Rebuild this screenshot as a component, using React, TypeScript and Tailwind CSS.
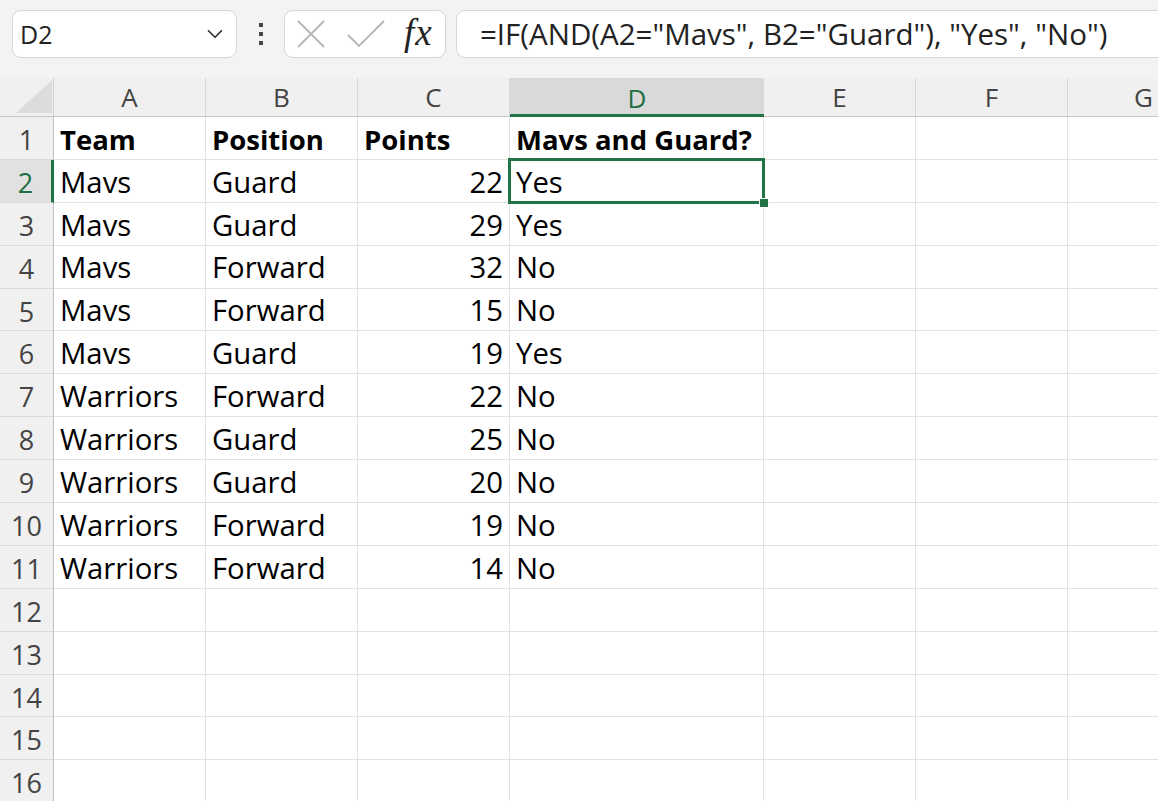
import { ChevronDown } from 'lucide-react';

const rows: [string, string, string, string][] = [
  ['Mavs', 'Guard', '22', 'Yes'],
  ['Mavs', 'Guard', '29', 'Yes'],
  ['Mavs', 'Forward', '32', 'No'],
  ['Mavs', 'Forward', '15', 'No'],
  ['Mavs', 'Guard', '19', 'Yes'],
  ['Warriors', 'Forward', '22', 'No'],
  ['Warriors', 'Guard', '25', 'No'],
  ['Warriors', 'Guard', '20', 'No'],
  ['Warriors', 'Forward', '19', 'No'],
  ['Warriors', 'Forward', '14', 'No'],
];

const cols = [
  { key: 'A', w: 'w-[152px]' },
  { key: 'B', w: 'w-[152px]' },
  { key: 'C', w: 'w-[152px]' },
  { key: 'D', w: 'w-[254px]' },
  { key: 'E', w: 'w-[152px]' },
  { key: 'F', w: 'w-[152px]' },
  { key: 'G', w: 'w-[152px]' },
];

const font = "font-['Open_Sans','Noto_Sans',sans-serif]";

function Toolbar() {
  return (
    <div className="h-[78px] bg-[#f3f3f3] flex items-start pt-[10px] pl-[12px] gap-0">
      {/* Name box */}
      <div className="w-[225px] h-[48px] bg-white border border-[#d6d6d6] rounded-[9px] flex items-center pl-[7px] pr-[8px]">
        <span className="text-[25px] text-[#222] leading-none">D2</span>
        <ChevronDown className="ml-auto text-[#333]" size={26} strokeWidth={1.6} />
      </div>
      {/* dots */}
      <div className="w-[47px] h-[48px] flex flex-col items-center justify-center gap-[5px]">
        <div className="w-[4px] h-[4px] bg-[#444]" />
        <div className="w-[4px] h-[4px] bg-[#444]" />
        <div className="w-[4px] h-[4px] bg-[#444]" />
      </div>
      {/* fx box */}
      <div className="w-[162px] h-[48px] bg-white border border-[#d6d6d6] rounded-[9px] flex items-center pl-[12px]">
        <svg width="28" height="28" viewBox="0 0 28 28" className="shrink-0">
          <path d="M1 1 L27 27 M27 1 L1 27" stroke="#b5b5b5" strokeWidth="1.8" fill="none" />
        </svg>
        <svg width="38" height="28" viewBox="0 0 38 28" className="shrink-0 ml-[22px]">
          <path d="M1 15 L12 26 L37 1" stroke="#b5b5b5" strokeWidth="1.8" fill="none" />
        </svg>
        <span className="ml-[19px] font-['Liberation_Serif',serif] italic text-[37px] text-[#222] leading-none tracking-[1px] -mt-[4px]">fx</span>
      </div>
      {/* formula box */}
      <div className="ml-[10px] flex-1 h-[48px] bg-white border border-[#d6d6d6] rounded-l-[9px] border-r-0 flex items-center pl-[23px]">
        <span className="text-[29.5px] text-[#222] leading-none whitespace-nowrap">=IF(AND(A2="Mavs", B2="Guard"), "Yes", "No")</span>
      </div>
    </div>
  );
}

function HeaderRow() {
  return (
    <div className="flex h-[39px] bg-[#f0f0f0] border-b border-[#c6c6c6]">
      <div className="w-[54px] shrink-0 border-r border-[#d0d0d0] relative">
        <svg width="54" height="38" viewBox="0 0 54 38" className="absolute left-0 top-0">
          <path d="M16 35 L52 2 L52 35 Z" fill="#dcdcdc" />
        </svg>
      </div>
      {cols.map(c => {
        const sel = c.key === 'D';
        return (
          <div
            key={c.key}
            className={`${c.w} shrink-0 flex items-center justify-center text-[26px] leading-none ${sel ? 'bg-[#d9d9d9] text-[#1e6e42] border-b-[3px] border-b-[#217346] -mb-px pt-[3px]' : 'text-[#444] border-r border-[#d6d6d6]'}`}
          >
            {c.key}
          </div>
        );
      })}
    </div>
  );
}

function Row({ n, data }: { n: number; data?: [string, string, string, string] }) {
  const bold = n === 1;
  const selRow = n === 2;
  const cells = data ?? ['', '', '', ''];
  return (
    <div className={`flex h-[42.9px] ${selRow ? 'relative z-10' : ''}`}>
      <div
        className={`w-[54px] shrink-0 flex items-center justify-center text-[27px] leading-none pt-[3px] border-b border-[#dadada] ${selRow ? 'bg-[#e1e1e1] text-[#1e6e42] border-r-[3px] border-r-[#217346]' : 'bg-[#f0f0f0] text-[#444] border-r border-r-[#c0c0c0]'}`}
      >
        {n}
      </div>
      {cols.map((c, i) => {
        const text = i < 4 ? cells[i] : '';
        const right = i === 2 && !bold;
        const isSel = selRow && c.key === 'D';
        return (
          <div
            key={c.key}
            className={`${c.w} shrink-0 relative flex items-center pt-[3px] border-r border-b border-[#e1e1e1] text-black leading-none whitespace-nowrap ${right ? 'justify-end pr-[6px]' : 'pl-[6px]'} ${bold ? 'font-bold text-[27.5px]' : 'text-[29.3px]'} ${isSel ? 'z-10' : ''}`}
          >
            {text}
            {isSel && (
              <>
                <div className="absolute -left-[2px] -top-[2px] -right-[2px] -bottom-[2px] border-[3px] border-[#217346]" />
                <div className="absolute -right-[6px] -bottom-[6px] w-[10px] h-[10px] bg-[#217346] border-[1.5px] border-white" />
              </>
            )}
          </div>
        );
      })}
    </div>
  );
}

export default function App() {
  const all = Array.from({ length: 16 }, (_, i) => i + 1);
  return (
    <div className={`w-[1158px] h-[801px] overflow-hidden bg-white ${font}`}>
      <Toolbar />
      <HeaderRow />
      <div>
        {all.map(n => (
          <Row
            key={n}
            n={n}
            data={n === 1 ? ['Team', 'Position', 'Points', 'Mavs and Guard?'] : rows[n - 2]}
          />
        ))}
      </div>
    </div>
  );
}
